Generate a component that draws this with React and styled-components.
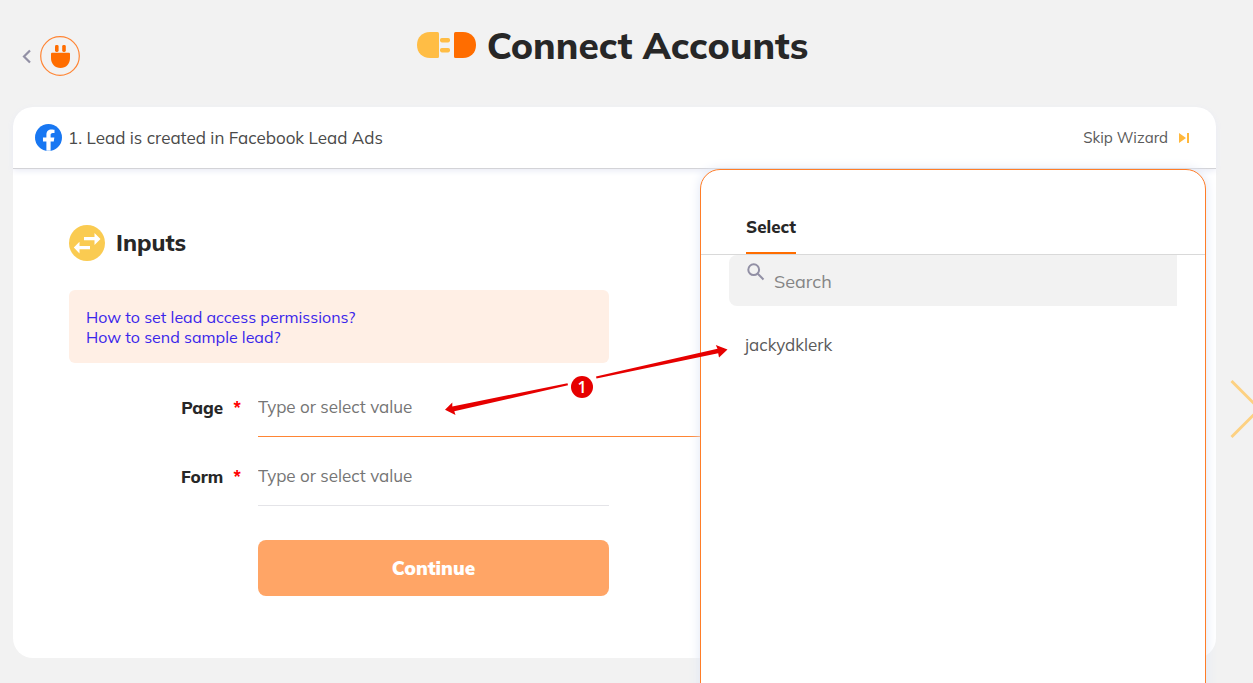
import React, { useState } from 'react';
import styled, { createGlobalStyle } from 'styled-components';


const GlobalStyle = createGlobalStyle`
    * {
        box-sizing: border-box;
        margin: 0;
        padding: 0;
    }

    body {
        background: #f2f2f2;
        color: #272727;
        font-family: Mulish, Muli, "Open Sans", sans-serif;
        font-size: 17px;
        line-height: 20px;
    }

    button, input {
        font-family: inherit;
        border: none;
        outline: none;
        background: none;
    }

    button {
        cursor: pointer;
    }

    svg {
        display: block;
    }
`;

const Page = styled.div`
    position: relative;
    min-height: 100vh;
    overflow: hidden;
`;

const TopBar = styled.header`
    display: grid;
    grid-template-columns: 1fr auto 1fr;
    height: 107px;
    padding: 0 48px 0 20px;
`;

const BackLink = styled.a`
    display: flex;
    align-items: center;
    align-self: start;
    justify-self: start;
    gap: 7px;
    margin-top: 36px;
`;

const Title = styled.h1`
    display: flex;
    align-items: center;
    align-self: start;
    gap: 10px;
    margin-top: 22px;
    font-size: 37px;
    line-height: 46px;
    font-weight: 800;
`;

const Stage = styled.main`
    display: grid;
    grid-template-columns: 1fr 37px;
    padding-left: 13px;
`;

const Card = styled.section`
    position: relative;
    background: white;
    border-radius: 20px;
`;

const CardHeader = styled.div`
    display: flex;
    align-items: center;
    justify-content: space-between;
    height: 62px;
    padding: 0 26px 0 22px;
    border-bottom: 1px solid #d3d3d7;
    box-shadow: 0 2px 6px #e9ebf5;
    border-radius: 20px 20px 0 0;
`;

const StepName = styled.h2`
    display: flex;
    align-items: center;
    gap: 6px;
    color: #4a4a4a;
    font-size: 17px;
    font-weight: 400;
`;

const SkipButton = styled.button`
    display: flex;
    align-items: center;
    gap: 11px;
    color: #5a5a5a;
    font-size: 15px;
`;

const Form = styled.form`
    width: 596px;
    padding: 56px 0 62px 56px;
`;

const SectionTitle = styled.h3`
    display: flex;
    align-items: center;
    gap: 11px;
    font-size: 23px;
    line-height: 36px;
    font-weight: 800;
`;

const Hints = styled.div`
    display: flex;
    flex-direction: column;
    align-items: flex-start;
    margin: 29px 0 14px;
    padding: 17px 17px 16px;
    border-radius: 6px;
    background: #ffefe5;

    a {
        color: #3a26ea;
        font-size: 16px;
        text-decoration: none;
    }
`;

const Field = styled.div`
    display: grid;
    grid-template-columns: 172px 1fr;
    align-items: center;
    gap: 17px;
    margin-bottom: 9px;

    label {
        display: flex;
        justify-content: flex-end;
        gap: 10px;
        padding-top: 2px;
        font-weight: 800;
    }

    label i {
        color: #ff0000;
        font-style: normal;
    }

    input {
        width: ${({ $open }) => ($open ? '480px' : '100%')};
        height: 60px;
        border-bottom: 1px solid ${({ $open }) => ($open ? '#ff8534' : '#e4e4e8')};
        color: #4a4a4a;
        font-size: 17px;
    }

    input::placeholder {
        color: #757575;
        opacity: 1;
    }
`;

const ContinueButton = styled.button`
    display: block;
    width: 351px;
    height: 56px;
    margin: 34px 0 0 auto;
    border-radius: 8px;
    background: #ffa566;
    color: white;
    font-size: 19px;
    font-weight: 900;
`;

const Drawer = styled.aside`
    position: absolute;
    top: 62px;
    right: 10px;
    width: 506px;
    height: 620px;
    border: 1px solid #ff7d28;
    border-radius: 20px;
    background: white;
    box-shadow: 0 0 12px #dfe6f5;
`;

const Tabs = styled.div`
    display: flex;
    align-items: flex-end;
    height: 85px;
    padding-left: 45px;
    border-bottom: 1px solid #d9d9d9;
`;

const Tab = styled.button`
    height: 38px;
    padding-bottom: 15px;
    border-bottom: 2px solid #ff6d00;
    color: #272727;
    font-size: 17px;
    line-height: 20px;
    font-weight: 800;
`;

const SearchBox = styled.label`
    display: flex;
    align-items: flex-start;
    gap: 9px;
    height: 51px;
    margin: 0 28px;
    padding: 8px 18px;
    border-radius: 8px 0 0 8px;
    background: #f2f2f2;

    input {
        flex: 1;
        height: 36px;
        color: #4a4a4a;
        font-size: 18px;
    }

    input::placeholder {
        color: #858585;
        opacity: 1;
    }
`;

const Options = styled.ul`
    margin-top: 29px;
    padding: 0 28px;
    list-style: none;

    button {
        width: 100%;
        padding: 0 16px;
        color: #5a5a5a;
        font-size: 17px;
        line-height: 20px;
        text-align: left;
    }
`;

const NextButton = styled.button`
    justify-self: start;
    align-self: start;
    margin: 272px 0 0 14px;
`;

const Callout = styled.div`
    position: absolute;
    top: 237px;
    left: 431px;
    width: 285px;
    height: 72px;
    pointer-events: none;

    span {
        position: absolute;
        top: 32px;
        left: 127px;
        width: 22px;
        height: 22px;
        border-radius: 50%;
        background: #e60000;
        color: white;
        font-family: "Open Sans", sans-serif;
        font-size: 16px;
        font-weight: 600;
        line-height: 22px;
        text-align: center;
    }
`;

const ChevronIcon = () => (
    <svg width="13" height="16" viewBox="0 0 13 16" fill="none" stroke="#9290a5" strokeWidth="2.2">
        <path d="M10 2.5L4 8.5L10 14.5" />
    </svg>
)

const PlugIcon = () => (
    <svg width="40" height="40" viewBox="0 0 40 40">
        <circle cx="20" cy="20" r="19.3" fill="none" stroke="#ff8534" strokeWidth="1.2" />
        <rect x="15" y="9" width="3.6" height="7" rx="1.4" fill="#ff6d00" />
        <rect x="22.2" y="9" width="3.6" height="7" rx="1.4" fill="#ff6d00" />
        <path d="M12 16.7H29Q30 16.7 30 17.7V22C30 28 26 32 20.5 32S11 28 11 22V17.7Q11 16.7 12 16.7Z" fill="#ff6d00" />
    </svg>
)

const ConnectIcon = () => (
    <svg width="60" height="28" viewBox="0 0 60 28">
        <path d="M13 1H20.5Q22 1 22 2.5V25.5Q22 27 20.5 27H13C5 27 0 21.5 0 14S5 1 13 1Z" fill="#ffbd45" />
        <rect x="23" y="7" width="10" height="4.4" rx="1.8" fill="#ffbd45" />
        <rect x="23" y="17" width="10" height="4.4" rx="1.8" fill="#ffbd45" />
        <path d="M38.5 1H46C54 1 59 6.5 59 14S54 27 46 27H38.5Q37 27 37 25.5V2.5Q37 1 38.5 1Z" fill="#ff6d00" />
    </svg>
)

const FacebookIcon = () => (
    <svg width="27" height="27" viewBox="0 0 24 24">
        <circle cx="12" cy="12" r="12" fill="#1877f2" />
        <path d="M10.13 23.85V15.56H7.08V12.1H10.13V9.45C10.13 6.44 11.92 4.78 14.66 4.78C15.97 4.78 17.34 5.02 17.34 5.02V7.97H15.83C14.34 7.97 13.88 8.89 13.88 9.84V12.1H17.2L16.67 15.56H13.88V23.85Z" fill="white" />
    </svg>
)

const SkipIcon = () => (
    <svg width="11" height="10" viewBox="0 0 11 10" fill="#ffb83d">
        <path d="M0 0L7 5L0 10ZM8 0H10V10H8Z" />
    </svg>
)

const SwapIcon = () => (
    <svg width="36" height="36" viewBox="0 0 36 36">
        <circle cx="18" cy="18" r="18" fill="#facb51" />
        <path d="M15 12H25.5V8L31.5 14L25.5 20V15.3H15ZM21 21V24.3H10.5V28.5L4.8 22.6L10.5 16.7V21Z" fill="white" />
    </svg>
)

const SearchIcon = () => (
    <svg width="18" height="18" viewBox="0 0 18 18" fill="none" stroke="#9290a5" strokeWidth="2">
        <circle cx="6.7" cy="6.7" r="5.4" />
        <path d="M10.8 10.8L16.5 16.5" />
    </svg>
)

const Select = () => {
    const [query, setQuery] = useState('');
    const pages = ['jackydklerk'].filter(name => name.includes(query.toLowerCase()));

    return (
        <Drawer>
            <Tabs role="tablist">
                <Tab type="button" role="tab" aria-selected="true">Select</Tab>
            </Tabs>
            <SearchBox>
                <SearchIcon />
                <input
                    type="text"
                    aria-label="Search"
                    placeholder="Search"
                    value={query}
                    onChange={e => setQuery(e.target.value)}
                />
            </SearchBox>
            <Options>
                {pages.map(name => (
                    <li key={name}><button type="button">{name}</button></li>
                ))}
            </Options>
        </Drawer>
    )
}

const App = () => {
    return (
        <Page>
            <GlobalStyle />
            <TopBar>
                <BackLink href="#" aria-label="Back">
                    <ChevronIcon />
                    <PlugIcon />
                </BackLink>
                <Title><ConnectIcon />Connect Accounts</Title>
            </TopBar>

            <Stage>
                <Card>
                    <CardHeader>
                        <StepName><FacebookIcon />1. Lead is created in Facebook Lead Ads</StepName>
                        <SkipButton type="button">Skip Wizard<SkipIcon /></SkipButton>
                    </CardHeader>

                    <Form onSubmit={e => e.preventDefault()}>
                        <SectionTitle><SwapIcon />Inputs</SectionTitle>
                        <Hints>
                            <a href="#permissions">How to set lead access permissions?</a>
                            <a href="#sample">How to send sample lead?</a>
                        </Hints>
                        <Field $open>
                            <label htmlFor="page">Page <i>*</i></label>
                            <input id="page" type="text" placeholder="Type or select value" />
                        </Field>
                        <Field>
                            <label htmlFor="form">Form <i>*</i></label>
                            <input id="form" type="text" placeholder="Type or select value" />
                        </Field>
                        <ContinueButton type="submit">Continue</ContinueButton>
                    </Form>

                    <Select />

                    <Callout>
                        <svg width="285" height="72" viewBox="0 0 285 72" fill="#e60000">
                            <path d="M123.5 39.2L8.3 62.4L8.3 58.5L1 65.7L11.5 71L10.3 67.2L124 41.2Z" />
                            <path d="M152 32.5L273.5 4.7L271.8 1L283.5 5.5L275 13.5L274.2 9.3L152.5 34.5Z" />
                        </svg>
                        <span>1</span>
                    </Callout>
                </Card>

                <NextButton type="button" aria-label="Next">
                    <svg width="32" height="60" viewBox="0 0 32 60" fill="none" stroke="#fdd182" strokeWidth="3">
                        <path d="M1.5 2L29.5 30L1.5 58" />
                    </svg>
                </NextButton>
            </Stage>
        </Page>
    )
}

export default App;
